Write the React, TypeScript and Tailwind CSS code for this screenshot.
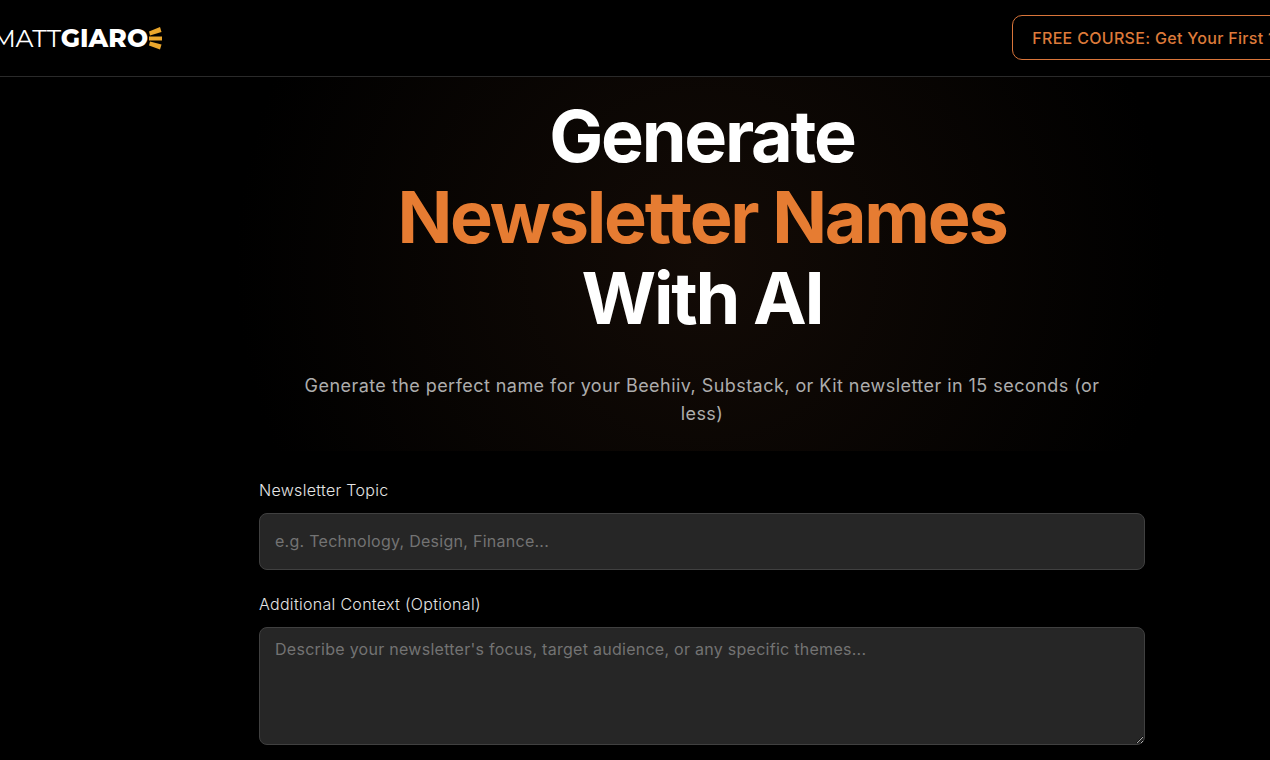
import React from 'react';

const sans = 'font-["Inter","Liberation_Sans",sans-serif]';

const Logo: React.FC = () => (
  <div className="flex items-center -ml-[8px]">
    <span className='font-["Montserrat","Lato","Open_Sans",sans-serif] text-[25px] leading-none text-white'>
      <span className="font-normal tracking-[-0.3px]">MATT</span>
      <span className="font-extrabold tracking-[0.1px]">GIARO</span>
    </span>
    <svg width="16" height="24" viewBox="0 0 16 24" className="ml-[-1px] shrink-0" fill="#eaa62c">
      <polygon points="2,5.5 13,1 14.5,6 3,9.5" />
      <polygon points="2,10.5 15,10.5 15,14.5 2,14.5" />
      <polygon points="3,15.5 14.5,18.5 13,23.5 2,19.5" />
    </svg>
  </div>
);

export default function App() {
  return (
    <div className={`h-[760px] w-[1270px] overflow-hidden bg-black ${sans}`}>
      <header className="flex h-[77px] items-center border-b border-[#2a2a2a]">
        <Logo />
        <a className="ml-[849px] mb-px flex h-[45px] shrink-0 items-center whitespace-nowrap rounded-[10px] border border-[#d9753a] px-[19px] text-base font-medium tracking-[0.31px] text-[#dd7a3a]">
          FREE COURSE: Get Your First 1,000 Subscribers
        </a>
      </header>

      <main className="ml-[134px] w-[1136px] overflow-hidden">
        <section className="flex h-[374px] flex-col items-center bg-[radial-gradient(circle,#130b06_0%,#000000_78%)] pt-[18px]">
          <h1 className="text-center text-7xl leading-[81px] font-bold tracking-[-2.25px] text-white">
            Generate
            <br />
            <span className="text-[#e67c32]">Newsletter Names</span>
            <br />
            With AI
          </h1>
          <p className="mt-[34px] w-[800px] text-center text-lg leading-7 tracking-[0.45px] text-[#adadad]">
            Generate the perfect name for your Beehiiv, Substack, or Kit newsletter in 15 seconds (or less)
          </p>
        </section>

        <form className="mx-auto flex w-[886px] flex-col pt-[27px]">
          <label className="text-base leading-6 font-light tracking-[0.3px] text-[#e5e5e5]">Newsletter Topic</label>
          <input
            placeholder="e.g. Technology, Design, Finance..."
            className="mt-[11px] h-[57px] rounded-lg border border-[#404040] bg-[#262626] px-[15px] pb-px text-base tracking-[0.27px] text-white outline-none placeholder:text-[#737373]"
          />
          <label className="mt-[22px] text-base leading-6 font-light tracking-[0.3px] text-[#e5e5e5]">Additional Context (Optional)</label>
          <textarea
            placeholder="Describe your newsletter's focus, target audience, or any specific themes..."
            className="mt-[11px] h-[118px] rounded-lg border border-[#404040] bg-[#262626] px-[15px] py-[9px] text-base tracking-[0.27px] text-white outline-none placeholder:text-[#737373]"
          />
        </form>
      </main>
    </div>
  );
}
